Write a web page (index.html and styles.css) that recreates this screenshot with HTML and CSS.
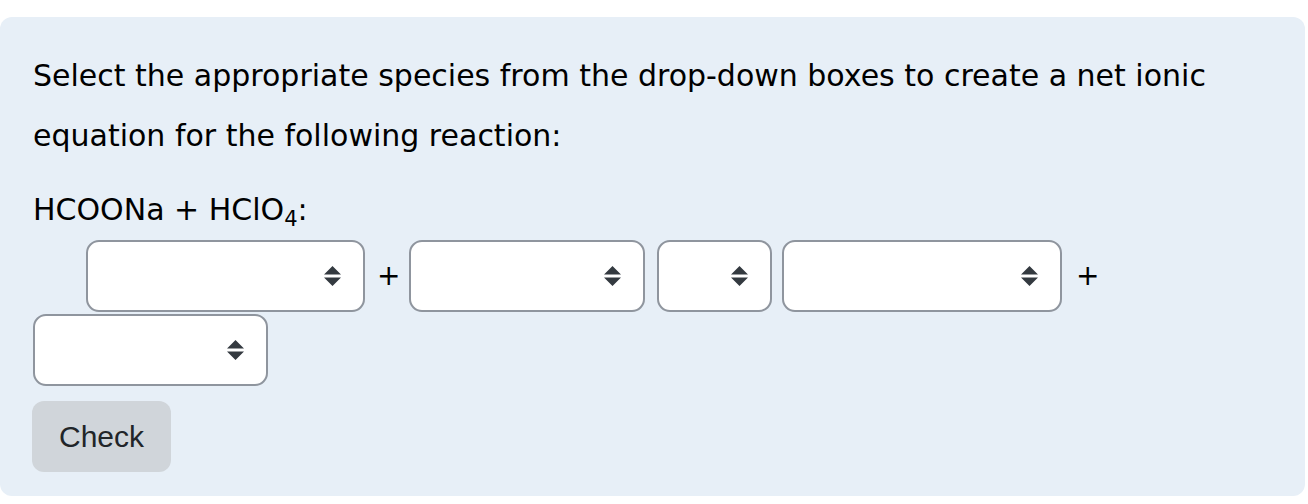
FILE: index.html
```html
<!DOCTYPE html>
<html>
<head>
<meta charset="utf-8">
<link rel="stylesheet" href="styles.css">
</head>
<body>
<div class="panel">
  <p class="prompt">Select the appropriate species from the drop-down boxes to create a net ionic equation for the following reaction:</p>
  <p class="reaction">HCOONa + HClO<sub>4</sub>:</p>
  <div class="equation">
    <div class="sel w1 first"><span class="arrow"><svg width="17" height="20" viewBox="0 0 17 20"><path d="M8.5 0 L17 8.5 L0 8.5 Z M0 11.5 L17 11.5 L8.5 20 Z" fill="#343a40"/></svg></span></div>
    <span class="op">+</span>
    <div class="sel w2"><span class="arrow"><svg width="17" height="20" viewBox="0 0 17 20"><path d="M8.5 0 L17 8.5 L0 8.5 Z M0 11.5 L17 11.5 L8.5 20 Z" fill="#343a40"/></svg></span></div>
    <div class="sel w3"><span class="arrow"><svg width="17" height="20" viewBox="0 0 17 20"><path d="M8.5 0 L17 8.5 L0 8.5 Z M0 11.5 L17 11.5 L8.5 20 Z" fill="#343a40"/></svg></span></div>
    <div class="sel w4"><span class="arrow"><svg width="17" height="20" viewBox="0 0 17 20"><path d="M8.5 0 L17 8.5 L0 8.5 Z M0 11.5 L17 11.5 L8.5 20 Z" fill="#343a40"/></svg></span></div>
    <span class="op">+</span>
    <div class="sel w5"><span class="arrow"><svg width="17" height="20" viewBox="0 0 17 20"><path d="M8.5 0 L17 8.5 L0 8.5 Z M0 11.5 L17 11.5 L8.5 20 Z" fill="#343a40"/></svg></span></div>
  </div>
  <button class="check">Check</button>
</div>
</body>
</html>
```
FILE: styles.css
```css
html, body {
  margin: 0;
  padding: 0;
  background: #ffffff;
}
body {
  padding-top: 17px;
  width: 1308px;
  height: 504px;
  overflow: hidden;
}
.panel {
  width: 1305px;
  height: 479px;
  box-sizing: border-box;
  background: #e7eff7;
  border-radius: 12px;
  padding: 29px 0 0 33px;
  font-family: "DejaVu Sans", Verdana, sans-serif;
  color: #000;
}
.prompt {
  margin: 0;
  font-size: 30px;
  line-height: 60px;
  width: 1230px;
}
.reaction {
  margin: 27px 0 0 0;
  font-size: 30px;
  line-height: 34px;
}
.reaction sub {
  font-size: 21px;
  vertical-align: -6px;
  line-height: 0;
}
.equation {
  display: flex;
  flex-wrap: wrap;
  align-items: center;
  row-gap: 2px;
  margin-top: 13px;
  width: 1100px;
}
.sel {
  position: relative;
  height: 72px;
  box-sizing: border-box;
  border: 2px solid #8f959e;
  border-radius: 13px;
  background: #ffffff;
}
.first { margin-left: 53px; }
.w1 { width: 279px; margin-right: 12px; }
.w2 { width: 236px; margin-right: 12px; }
.w3 { width: 115px; margin-right: 10px; }
.w4 { width: 280px; margin-right: 14px; }
.w5 { width: 235px; }
.arrow {
  position: absolute;
  right: 22px;
  top: 50%;
  margin-top: -10px;
  width: 17px;
  height: 20px;
  display: block;
}
.arrow svg { display: block; }
.op {
  font-size: 28px;
  width: 19px;
  margin-right: 13px;
  line-height: 30px;
}
.check {
  display: block;
  margin-top: 15px;
  width: 139px;
  height: 71px;
  border: none;
  border-radius: 12px;
  background: #d0d5da;
  color: #212529;
  font-family: "Liberation Sans", Arial, sans-serif;
  font-size: 30px;
  padding: 0;
  margin-left: -1px;
}
```
